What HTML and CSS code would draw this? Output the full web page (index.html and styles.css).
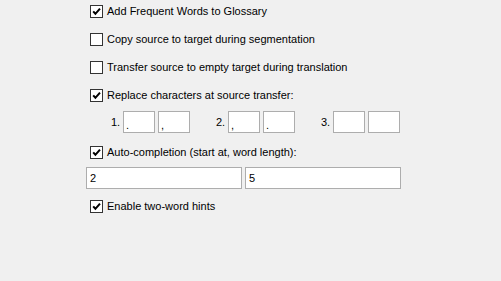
FILE: index.html
```html
<!DOCTYPE html>
<html>
<head>
<meta charset="utf-8">
<link rel="stylesheet" href="styles.css">
</head>
<body>
<div class="panel">
  <label class="check-row r1"><span class="box checked"><svg viewBox="0 0 11 11" width="11" height="11"><polyline points="2.2,5.4 4.4,7.8 9,2.6" /></svg></span><span class="lbl">Add Frequent Words to Glossary</span></label>
  <label class="check-row r2"><span class="box"></span><span class="lbl">Copy source to target during segmentation</span></label>
  <label class="check-row r3"><span class="box"></span><span class="lbl">Transfer source to empty target during translation</span></label>
  <label class="check-row r4"><span class="box checked"><svg viewBox="0 0 11 11" width="11" height="11"><polyline points="2.2,5.4 4.4,7.8 9,2.6" /></svg></span><span class="lbl">Replace characters at source transfer:</span></label>
  <div class="chars">
    <div class="grp"><span class="num">1.</span><span class="cbox">.</span><span class="cbox">,</span></div>
    <div class="grp"><span class="num">2.</span><span class="cbox">,</span><span class="cbox">.</span></div>
    <div class="grp"><span class="num">3.</span><span class="cbox"></span><span class="cbox"></span></div>
  </div>
  <label class="check-row r5"><span class="box checked"><svg viewBox="0 0 11 11" width="11" height="11"><polyline points="2.2,5.4 4.4,7.8 9,2.6" /></svg></span><span class="lbl">Auto-completion (start at, word length):</span></label>
  <div class="fields">
    <span class="field">2</span>
    <span class="field">5</span>
  </div>
  <label class="check-row r6"><span class="box checked"><svg viewBox="0 0 11 11" width="11" height="11"><polyline points="2.2,5.4 4.4,7.8 9,2.6" /></svg></span><span class="lbl">Enable two-word hints</span></label>
</div>
</body>
</html>
```
FILE: styles.css
```css
html, body {
  margin: 0;
  padding: 0;
  background: #f0f0f0;
  width: 501px;
  height: 281px;
  overflow: hidden;
}
body {
  font-family: "Liberation Sans", Arial, sans-serif;
  font-size: 11px;
  color: #000;
}
.panel {
  display: flex;
  flex-direction: column;
  align-items: flex-start;
  padding: 5px 0 0 90px;
}
.check-row {
  display: flex;
  align-items: center;
  height: 13px;
  gap: 4px;
}
.r1, .r2, .r3 { margin-bottom: 15px; }
.r4 { margin-bottom: 9px; }
.r5 { margin-bottom: 8px; }
.box {
  box-sizing: border-box;
  width: 13px;
  height: 13px;
  border: 1px solid #333;
  background: #fff;
  display: flex;
  align-items: center;
  justify-content: center;
}
.box svg polyline {
  fill: none;
  stroke: #000;
  stroke-width: 2;
}
.lbl {
  line-height: 13px;
  white-space: nowrap;
}
.chars {
  display: flex;
  margin-left: 21px;
  margin-bottom: 13px;
}
.grp {
  display: flex;
  align-items: center;
  width: 105px;
  gap: 3px;
}
.num {
  width: 9px;
}
.cbox {
  box-sizing: border-box;
  width: 32px;
  height: 22px;
  background: #fff;
  border: 1px solid #adadad;
  padding: 7px 0 0 2px;
  line-height: 13px;
}
.fields {
  display: flex;
  gap: 3px;
  margin-left: -4px;
  margin-bottom: 11px;
}
.field {
  box-sizing: border-box;
  width: 156px;
  height: 22px;
  background: #fff;
  border: 1px solid #adadad;
  padding: 0 3px;
  display: flex;
  align-items: center;
}
```
